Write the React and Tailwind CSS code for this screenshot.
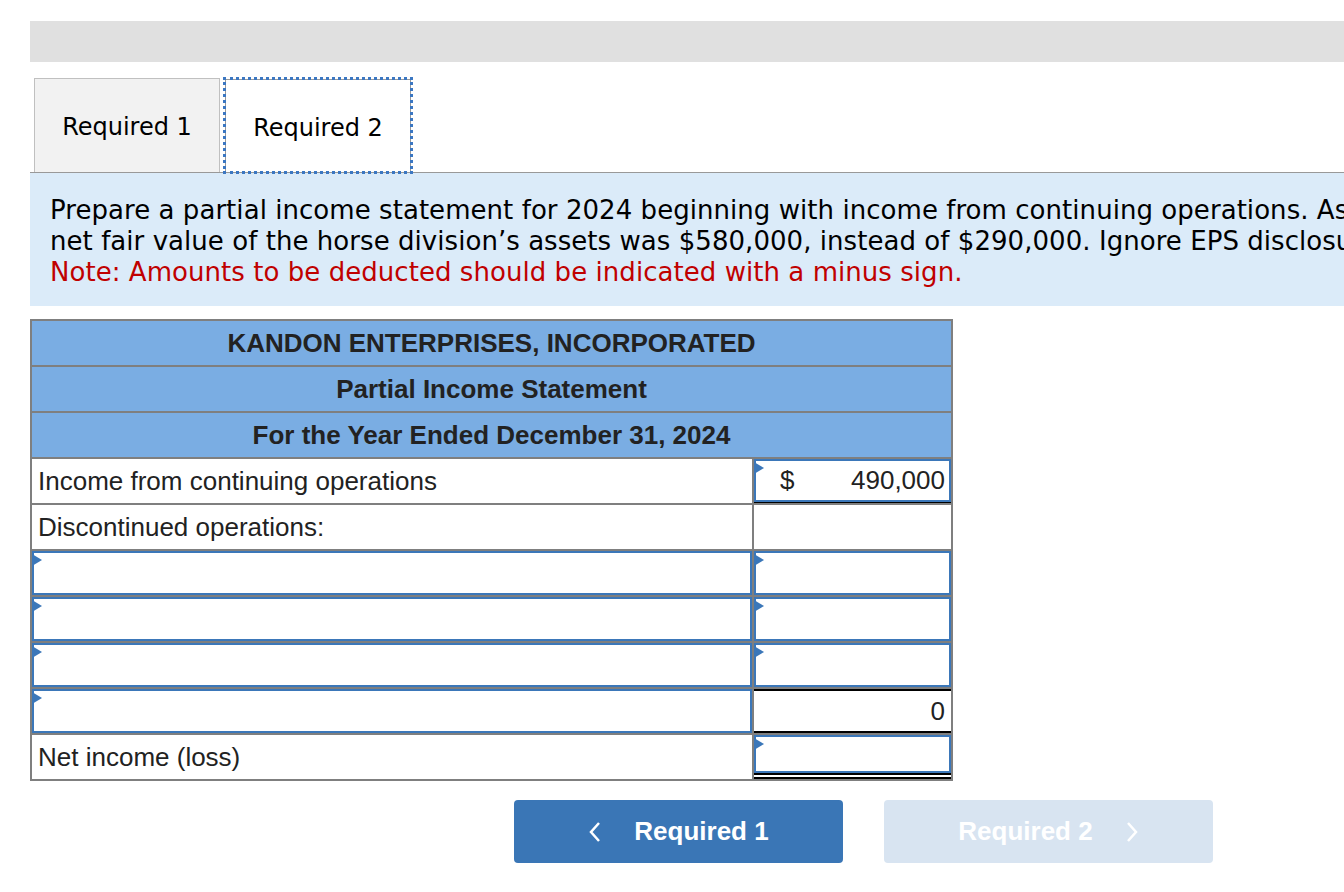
import { useState } from "react";

const VERDANA = { fontFamily: '"DejaVu Sans", Verdana, sans-serif' };
const ARIAL = { fontFamily: '"Liberation Sans", Arial, sans-serif' };

const Flag = () => (
  <span className="absolute -left-[2px] top-[1px] w-0 h-0 border-y-[6px] border-y-transparent border-l-[10px] border-l-[#3b77b9]" />
);

const InputCell = ({ children, className = "" }) => (
  <div className={"relative h-full border-2 border-[#3b77b9] bg-white " + className}>
    <Flag />
    {children}
  </div>
);

const HeaderRow = ({ children, first }) => (
  <div
    className={
      "h-[44px] box-content flex items-center justify-center bg-[#7aade3] text-[26px] font-bold text-[#222] " +
      (first ? "" : "border-t-2 border-[#7f7f7f]")
    }
  >
    {children}
  </div>
);

const Row = ({ left, right }) => (
  <div className="h-[44px] box-content flex border-t-2 border-[#7f7f7f]">
    <div className="flex-1 h-full">{left}</div>
    <div className="w-[199px] h-full border-l-2 border-[#7f7f7f]">{right}</div>
  </div>
);

const Label = ({ children }) => (
  <div className="h-full flex items-center pl-[6px] text-[26px] text-[#222]">{children}</div>
);

const ChevronLeft = () => (
  <svg width="14" height="22" viewBox="0 0 14 22" fill="none">
    <polyline points="11,2 3,11 11,20" stroke="white" strokeWidth="2.5" />
  </svg>
);

const ChevronRight = () => (
  <svg width="14" height="22" viewBox="0 0 14 22" fill="none">
    <polyline points="3,2 11,11 3,20" stroke="white" strokeWidth="2.5" />
  </svg>
);

const App = () => {
  const [tab, setTab] = useState(2);

  return (
    <div className="w-[1344px] h-[892px] overflow-hidden bg-white pt-[21px] pl-[30px]">
      <div className="h-[41px] bg-[#e0e0e0]" />

      {/* tabs */}
      <div className="mt-[15px] flex items-end border-b border-[#999] pl-[4px]" style={VERDANA}>
        <button
          onClick={() => setTab(1)}
          className="w-[186px] h-[94px] pt-[3px] bg-[#f2f2f2] border border-b-0 border-[#c0c0c0] text-[24px] text-black"
        >
          Required 1
        </button>
        <div className="ml-[3px] -mb-[2px] p-[2px] outline-[3px] outline-dotted outline-[#3b77c2] -outline-offset-[3px]">
          <button
            onClick={() => setTab(2)}
            className="w-[186px] h-[93px] pt-[3px] bg-white border border-b-0 border-[#999] text-[24px] text-black"
          >
            Required 2
          </button>
        </div>
      </div>

      {/* instructions */}
      <div
        className="w-[1400px] bg-[#dbebf9] pt-[22px] pb-[18px] pl-[20px] text-[26px] leading-[31px] text-black whitespace-nowrap tracking-[0.05px]"
        style={VERDANA}
      >
        <p>
          Prepare a partial income statement for 2024 beginning with income from continuing operations. Assume the
        </p>
        <p>net fair value of the horse division’s assets was $580,000, instead of $290,000. Ignore EPS disclosures.</p>
        <p className="text-[#c00000]">Note: Amounts to be deducted should be indicated with a minus sign.</p>
      </div>

      {/* statement */}
      <div className="mt-[13px] w-[923px] border-2 border-[#7f7f7f]" style={ARIAL}>
        <HeaderRow first>KANDON ENTERPRISES, INCORPORATED</HeaderRow>
        <HeaderRow>Partial Income Statement</HeaderRow>
        <HeaderRow>For the Year Ended December 31, 2024</HeaderRow>
        <Row
          left={<Label>Income from continuing operations</Label>}
          right={
            <div className="h-full flex flex-col">
              <InputCell className="flex-1 flex items-center justify-between pl-[24px] pr-[4px] text-[26px] text-[#222]">
                <span>$</span>
                <span>490,000</span>
              </InputCell>
              <div className="h-[2px] bg-black" />
            </div>
          }
        />
        <Row left={<Label>Discontinued operations:</Label>} right={null} />
        <Row left={<InputCell />} right={<InputCell />} />
        <Row left={<InputCell />} right={<InputCell />} />
        <Row left={<InputCell />} right={<InputCell />} />
        <Row
          left={<InputCell />}
          right={
            <div className="h-full border-y-2 border-black flex items-center justify-end pr-[6px] text-[26px] text-[#222]">
              0
            </div>
          }
        />
        <Row
          left={<Label>Net income (loss)</Label>}
          right={
            <div className="h-full flex flex-col">
              <InputCell className="flex-1" />
              <div className="h-[6px] border-y-2 border-black" />
            </div>
          }
        />
      </div>

      {/* navigation */}
      <div className="mt-[19px] ml-[484px] flex gap-[41px]" style={ARIAL}>
        <button className="w-[329px] h-[63px] rounded-[4px] bg-[#3a76b6] flex items-center justify-center gap-[32px] text-white text-[26px] font-bold">
          <ChevronLeft />
          <span>Required 1</span>
        </button>
        <button className="w-[329px] h-[63px] rounded-[4px] bg-[#d8e4f1] flex items-center justify-center gap-[32px] text-white text-[26px] font-bold">
          <span>Required 2</span>
          <ChevronRight />
        </button>
      </div>
    </div>
  );
};

export default App;
